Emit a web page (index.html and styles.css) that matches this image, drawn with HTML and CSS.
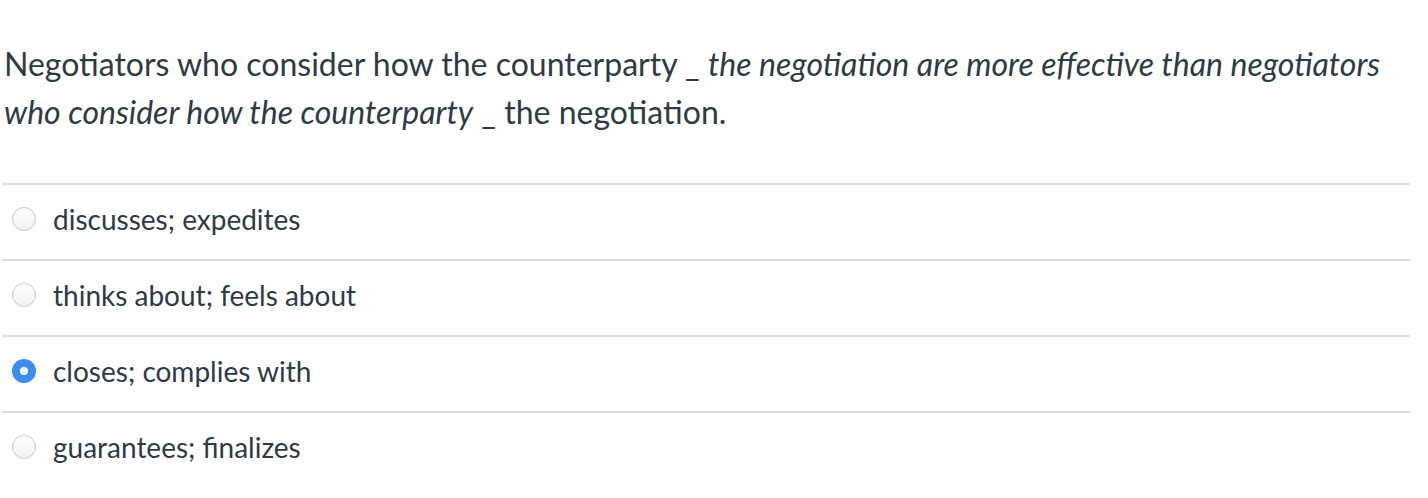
FILE: index.html
```html
<!DOCTYPE html>
<html>
<head>
<meta charset="utf-8">
<link rel="stylesheet" href="styles.css">
</head>
<body>
<div class="quiz">
  <div class="question">Negotiators who consider how the counterparty _ <em>the negotiation are more effective than negotiators who consider how the counterparty</em> _ the negotiation.</div>
  <div class="answers">
    <label class="answer"><span class="radio"></span><span class="label">discusses; expedites</span></label>
    <label class="answer"><span class="radio"></span><span class="label">thinks about; feels about</span></label>
    <label class="answer"><span class="radio checked"></span><span class="label">closes; complies with</span></label>
    <label class="answer"><span class="radio"></span><span class="label">guarantees; finalizes</span></label>
  </div>
</div>
</body>
</html>
```
FILE: styles.css
```css
html, body {
  margin: 0;
  padding: 0;
  background: #fff;
}
body {
  font-family: Lato, "Open Sans", sans-serif;
  color: #2d3b45;
}
.quiz {
  width: 1410px;
}
.question {
  padding: 40px 0 0 4px;
  font-size: 32px;
  line-height: 48px;
}
.question em {
  font-style: italic;
}
.answers {
  margin: 47px 0 0 2px;
  width: 1408px;
}
.answer {
  display: flex;
  align-items: center;
  height: 68px;
  border-top: 2px solid #dcdcdc;
  padding-bottom: 6px;
  box-sizing: content-box;
}
.radio {
  width: 22px;
  height: 22px;
  border-radius: 50%;
  border: 1px solid #c7c7c7;
  background: linear-gradient(#fff, #f1f1f1);
  margin-left: 10px;
  margin-right: 17px;
  flex: none;
  box-sizing: content-box;
}
.radio.checked {
  width: 8px;
  height: 8px;
  border: 8px solid #3b8cf3;
  background: #fff;
}
.label {
  font-size: 28px;
}
```
